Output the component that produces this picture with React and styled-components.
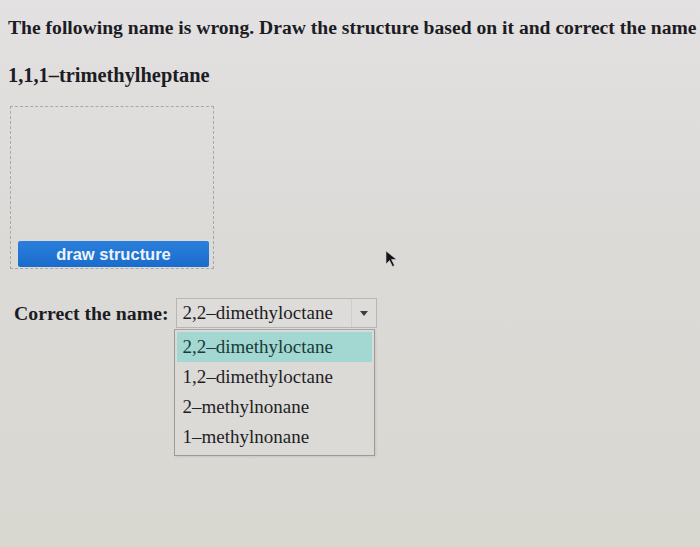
import React from "react";
import styled, { createGlobalStyle } from "styled-components";

const Global = createGlobalStyle`
  html, body { margin: 0; padding: 0; }
  body {
    width: 700px;
    height: 547px;
    overflow: hidden;
    background: linear-gradient(180deg, #e3e1e1 0%, #dcdad7 45%, #d8d8d1 100%);
    font-family: "Liberation Serif", "Times New Roman", serif;
    color: #1c1c24;
  }
`;

const Page = styled.div`
  position: relative;
  width: 700px;
  height: 547px;
  padding: 16px 0 0 8px;
  box-sizing: border-box;
`;

const Title = styled.div`
  font-weight: bold;
  font-size: 19.6px;
  line-height: 24px;
  white-space: nowrap;
`;

const WrongName = styled.div`
  margin-top: 23px;
  font-weight: bold;
  font-size: 20.4px;
  line-height: 24px;
`;

const Canvas = styled.div`
  margin: 19px 0 0 2px;
  width: 204px;
  height: 163px;
  box-sizing: border-box;
  border: 1.5px dashed #aaa6aa;
  display: flex;
  flex-direction: column;
  justify-content: flex-end;
  padding: 0 4px 1px 7px;
`;

const DrawButton = styled.button`
  height: 26px;
  border: none;
  border-radius: 2px;
  background: linear-gradient(180deg, #2a7fdc 0%, #1a6ccb 100%);
  color: #eef3fb;
  font-family: "Liberation Sans", Arial, sans-serif;
  font-weight: bold;
  font-size: 16.5px;
  padding: 0;
`;

const AnswerRow = styled.div`
  margin: 29px 0 0 6px;
  display: flex;
  align-items: flex-start;
  gap: 7px;
`;

const Label = styled.div`
  font-weight: bold;
  font-size: 19.8px;
  line-height: 24px;
  padding-top: 3px;
`;

const SelectWrap = styled.div`
  position: relative;
  display: flex;
  flex-direction: column;
`;

const SelectBox = styled.div`
  width: 201px;
  height: 30px;
  box-sizing: border-box;
  border: 1px solid #b8b6b4;
  display: flex;
  align-items: center;
  background: #dedcda;
`;

const SelectText = styled.div`
  flex: 1;
  padding-left: 6px;
  font-size: 19px;
  line-height: 22px;
  height: 100%;
  display: flex;
  align-items: center;
  border-right: 1px solid #cfcdcb;
`;

const Arrow = styled.div`
  width: 24px;
  display: flex;
  justify-content: center;
  align-items: center;
`;

const List = styled.div`
  margin: 1px 0 0 -2px;
  width: 201px;
  box-sizing: border-box;
  border: 1px solid #9c9a98;
  border-top-color: #a8a6a4;
  padding: 2px 2px 3px 2px;
  background: #dcdad7;
  box-shadow: 1px 1px 2px rgba(0,0,0,0.08);
`;

const Option = styled.div`
  height: 30px;
  display: flex;
  align-items: center;
  padding-left: 6px;
  font-size: 19px;
  background: ${p => (p.$active ? "#a2d8d1" : "transparent")};
  color: ${p => (p.$active ? "#1b3a38" : "#1f1f26")};
`;

const Cursor = styled.svg`
  position: absolute;
  left: 385px;
  top: 250px;
`;

const options = [
  "2,2–dimethyloctane",
  "1,2–dimethyloctane",
  "2–methylnonane",
  "1–methylnonane",
];

export default function App() {
  return (
    <>
      <Global />
      <Page>
        <Title>The following name is wrong. Draw the structure based on it and correct the name</Title>
        <WrongName>1,1,1–trimethylheptane</WrongName>
        <Canvas>
          <DrawButton>draw structure</DrawButton>
        </Canvas>
        <AnswerRow>
          <Label>Correct the name:</Label>
          <SelectWrap>
            <SelectBox>
              <SelectText>2,2–dimethyloctane</SelectText>
              <Arrow>
                <svg width="8" height="5" viewBox="0 0 8 5">
                  <path d="M0 0 L8 0 L4 5 Z" fill="#3a3a40" />
                </svg>
              </Arrow>
            </SelectBox>
            <List>
              {options.map((o, i) => (
                <Option key={o} $active={i === 0}>{o}</Option>
              ))}
            </List>
          </SelectWrap>
        </AnswerRow>
        <Cursor width="14" height="18" viewBox="0 0 14 18">
          <path d="M1 1 L1 14 L4.5 10.5 L7.5 16.5 L9.5 15.5 L6.5 9.5 L11.5 9.5 Z" fill="#15151a" stroke="#d0d0d0" strokeWidth="0.6" />
        </Cursor>
      </Page>
    </>
  );
}
